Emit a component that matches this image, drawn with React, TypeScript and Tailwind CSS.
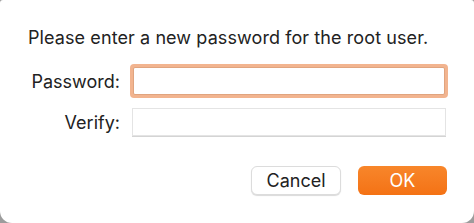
import React from "react";

export default function App() {
  return (
    <div className="w-[474px] h-[223px] bg-[#9c9c9c] overflow-hidden" style={{ fontFamily: 'Inter, "Liberation Sans", Arial, sans-serif' }}>
      <div className="w-[474px] h-[223px] bg-white rounded-t-[3px] rounded-b-[12px] flex flex-col text-[#222]">
        <div className="pl-[28px] pt-[27px] text-[18px] leading-[21px] tracking-[0.09px]">Please enter a new password for the root user.</div>
        <div className="flex items-center mt-[16px]">
          <div className="w-[120px] text-right text-[18px] leading-[21px]">Password:</div>
          <div className="ml-[10px] w-[318px] h-[34px] rounded-[4px] bg-[#f2b48f] p-[3px]">
            <div className="w-full h-full bg-white rounded-[2px] border border-[#e0a47f]"></div>
          </div>
        </div>
        <div className="flex items-center mt-[10px]">
          <div className="w-[120px] text-right text-[18px] leading-[21px]">Verify:</div>
          <div className="ml-[12px] w-[314px] h-[28px] bg-white border border-[#e4e4e4] shadow-[0_1px_0_#d4d4d4]"></div>
        </div>
        <div className="flex justify-end mt-[30px] pr-[27px] gap-[17px]">
          <button className="w-[90px] h-[29px] rounded-[6px] bg-white border border-[#dcdcdc] shadow-[0_1px_1px_rgba(0,0,0,0.15)] text-[18px] leading-[21px] text-[#222]">Cancel</button>
          <button className="w-[89px] h-[29px] rounded-[6px] bg-gradient-to-b from-[#f8862a] to-[#f47214] text-[18px] leading-[21px] text-white">OK</button>
        </div>
      </div>
    </div>
  );
}
